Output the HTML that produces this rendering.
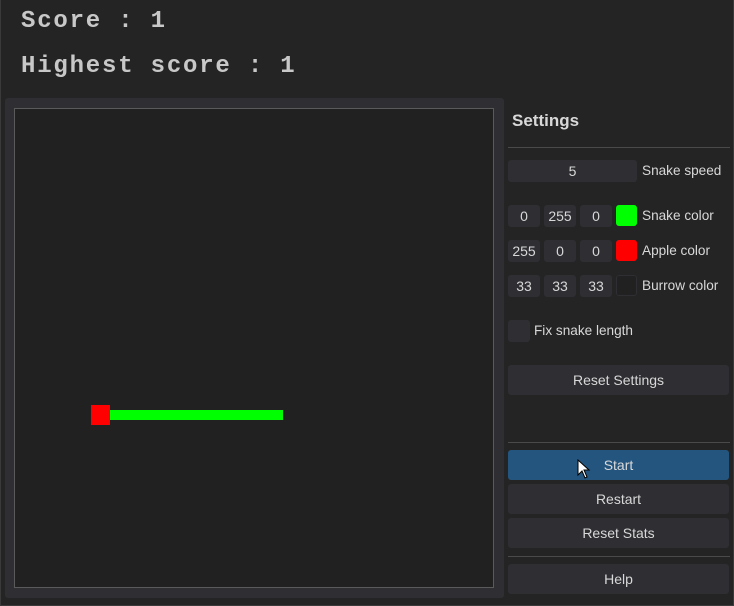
<!DOCTYPE html>
<html><head><style>
*{margin:0;padding:0;box-sizing:border-box}
body{width:734px;height:606px;background:#242424;position:relative;overflow:hidden;font-family:"Liberation Sans",sans-serif;color:#dcdcdc}
.frame{position:absolute;left:0;top:0;width:734px;height:606px;border:1px solid #3a3a3a;border-top:none}
.score{position:absolute;left:21px;font-family:"Liberation Mono",monospace;font-weight:bold;font-size:24px;letter-spacing:1.8px;color:#c8c8c8}
.lp{position:absolute;left:5px;top:98px;width:499px;height:500px;background:#2f2f33;border-radius:3px}
.cv{position:absolute;left:14px;top:108px;width:480px;height:480px;background:#212121;border:1px solid #5a5a5a}
.a{position:absolute}
.box{position:absolute;background:#2e2e33;border-radius:3px;font-size:14px;color:#d8d8d8;text-align:center;height:22px;line-height:22px}
.lbl{position:absolute;font-size:13.6px;color:#d8d8d8}
.hr{position:absolute;left:508px;width:222px;height:1px;background:#4a4a4a}
.btn{position:absolute;left:508px;width:221px;height:30px;line-height:30px;background:#2e2e33;border-radius:3px;text-align:center;font-size:14px;color:#d8d8d8}
.sw{position:absolute;width:21px;height:21px;border-radius:3px;left:616px}
</style></head><body>
<div class="frame"></div>
<div class="score" style="top:8px">Score : 1</div>
<div class="score" style="top:53px">Highest score : 1</div>
<div class="lp"></div>
<div class="cv"></div>
<div class="a" style="left:91px;top:405px;width:19px;height:20px;background:#ff0000"></div>
<div class="a" style="left:110px;top:410px;width:173px;height:10px;background:#00ff00"></div>

<div class="lbl" style="left:512px;top:111px;font-size:17px;font-weight:bold">Settings</div>
<div class="hr" style="top:147px"></div>
<div class="box" style="left:508px;top:160px;width:129px">5</div>
<div class="lbl" style="left:642px;top:163px">Snake speed</div>

<div class="box" style="left:508px;top:205px;width:32px">0</div>
<div class="box" style="left:544px;top:205px;width:32px">255</div>
<div class="box" style="left:580px;top:205px;width:32px">0</div>
<div class="sw" style="top:205px;background:#00ff00"></div>
<div class="lbl" style="left:642px;top:208px">Snake color</div>

<div class="box" style="left:508px;top:240px;width:32px">255</div>
<div class="box" style="left:544px;top:240px;width:32px">0</div>
<div class="box" style="left:580px;top:240px;width:32px">0</div>
<div class="sw" style="top:240px;background:#ff0000"></div>
<div class="lbl" style="left:642px;top:243px">Apple color</div>

<div class="box" style="left:508px;top:275px;width:32px">33</div>
<div class="box" style="left:544px;top:275px;width:32px">33</div>
<div class="box" style="left:580px;top:275px;width:32px">33</div>
<div class="sw" style="top:275px;background:#212121;border:1px solid #2e2e33"></div>
<div class="lbl" style="left:642px;top:278px">Burrow color</div>

<div class="box" style="left:508px;top:320px;width:22px;height:22px"></div>
<div class="lbl" style="left:534px;top:323px">Fix snake length</div>

<div class="btn" style="top:365px">Reset Settings</div>
<div class="hr" style="top:442px"></div>
<div class="btn" style="top:450px;background:#23557f">Start</div>
<svg class="a" style="left:577px;top:459px" width="14" height="20" viewBox="0 0 14 20"><path d="M1 1 L1 16 L5 12 L8 19 L10 18 L7 11 L12 11 Z" fill="#fff" stroke="#000" stroke-width="1"/></svg>
<div class="btn" style="top:484px">Restart</div>
<div class="btn" style="top:518px">Reset Stats</div>
<div class="hr" style="top:556px"></div>
<div class="btn" style="top:564px">Help</div>
</body></html>
